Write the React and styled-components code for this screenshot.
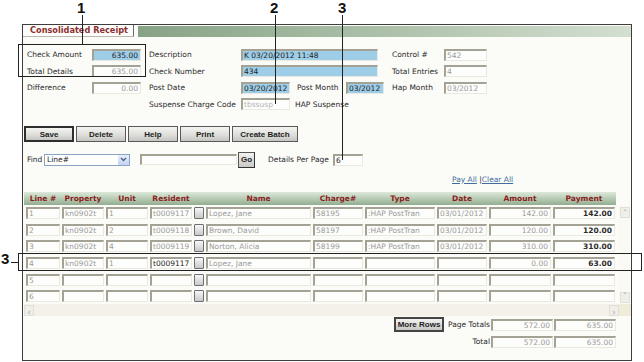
import styled, { createGlobalStyle } from 'styled-components'

const GlobalStyle = createGlobalStyle`
  html, body { margin: 0; padding: 0; background: #ffffff; }
  body { font-family: 'DejaVu Sans', Verdana, sans-serif; }
`

const COLS = '34px 42px 42px 42px 10px 105px 50px 70px 50px 62px 62px'

const rows = [
  ['1', 'kn0902t', '1', 't0009117', 'Lopez, Jane', '58195', ':HAP PostTran', '03/01/2012', '142.00', '142.00'],
  ['2', 'kn0902t', '2', 't0009118', 'Brown, David', '58197', ':HAP PostTran', '03/01/2012', '120.00', '120.00'],
  ['3', 'kn0902t', '4', 't0009119', 'Norton, Alicia', '58199', ':HAP PostTran', '03/01/2012', '310.00', '310.00'],
  ['4', 'kn0902t', '1', 't0009117', 'Lopez, Jane', '', '', '', '0.00', '63.00', true],
  ['5', '', '', '', '', '', '', '', '', ''],
  ['6', '', '', '', '', '', '', '', '', '']
]

export default function App () {
  return (
    <Page>
      <GlobalStyle />
      <Frame>
        <TabRow>
          <Tab>Consolidated Receipt</Tab>
          <TabBar />
        </TabRow>

        <Form>
          <Row>
            <Label $w={65}>Check Amount</Label>
            <Field $w={49} $blue $right $dark>635.00</Field>
            <Label $w={92} $ml={8}>Description</Label>
            <Field $w={137} $blue $dark>K 03/20/2012 11:48</Field>
            <Label $w={52} $ml={14}>Control #</Label>
            <Field $w={43}>542</Field>
          </Row>
          <Row>
            <Label $w={65}>Total Details</Label>
            <Field $w={49} $right>635.00</Field>
            <Label $w={92} $ml={8}>Check Number</Label>
            <Field $w={137} $blue $dark>434</Field>
            <Label $w={52} $ml={14}>Total Entries</Label>
            <Field $w={43}>4</Field>
          </Row>
          <Row>
            <Label $w={65}>Difference</Label>
            <Field $w={49} $right>0.00</Field>
            <Label $w={92} $ml={8}>Post Date</Label>
            <Field $w={49} $blue $dark>03/20/2012</Field>
            <Label $w={49} $ml={7}>Post Month</Label>
            <Field $w={38} $blue $dark>03/2012</Field>
            <Label $w={52} $ml={8}>Hap Month</Label>
            <Field $w={43}>03/2012</Field>
          </Row>
          <Row>
            <Label $w={114}></Label>
            <Label $w={92} $ml={8}>Suspense Charge Code</Label>
            <Field $w={49} $faint>tbssusp</Field>
            <Label $ml={5}>HAP Suspense</Label>
          </Row>
        </Form>

        <Toolbar>
          <Button $w={50} $focus>Save</Button>
          <Button $w={50}>Delete</Button>
          <Button $w={50}>Help</Button>
          <Button $w={50}>Print</Button>
          <Button $w={66}>Create Batch</Button>
        </Toolbar>

        <FindRow>
          <Label $w={17}>Find</Label>
          <Select>
            <span>Line#</span>
            <SelectArrow>
              <svg width="7" height="5" viewBox="0 0 7 5">
                <path d="M1 1 L3.5 3.5 L6 1" fill="none" stroke="#4d6185" strokeWidth="1.4" />
              </svg>
            </SelectArrow>
          </Select>
          <Field $w={97} $ml={10} $h={11}></Field>
          <SmallButton>Go</SmallButton>
          <Label $w={65} $ml={13}>Details Per Page</Label>
          <Field $w={30} $dark>6</Field>
        </FindRow>

        <LinkRow>
          <Link>Pay All</Link>
          <span>&nbsp;|</span>
          <Link>Clear All</Link>
        </LinkRow>

        <GridHeader>
          <HeadCell>Line #</HeadCell>
          <HeadCell>Property</HeadCell>
          <HeadCell>Unit</HeadCell>
          <HeadCell>Resident</HeadCell>
          <HeadCell></HeadCell>
          <HeadCell>Name</HeadCell>
          <HeadCell>Charge#</HeadCell>
          <HeadCell>Type</HeadCell>
          <HeadCell>Date</HeadCell>
          <HeadCell>Amount</HeadCell>
          <HeadCell>Payment</HeadCell>
        </GridHeader>

        <GridArea>
          <GridBody>
            {rows.map(r => (
              <GridRow key={r[0]}>
                <Field $w={34}>{r[0]}</Field>
                <Field $w={42}>{r[1]}</Field>
                <Field $w={42}>{r[2]}</Field>
                <Field $w={42} $dark={r[10]}>{r[3]}</Field>
                <LookupButton />
                <Field $w={105}>{r[4]}</Field>
                <Field $w={50}>{r[5]}</Field>
                <Field $w={70}>{r[6]}</Field>
                <Field $w={50}>{r[7]}</Field>
                <Field $w={62} $right>{r[8]}</Field>
                <Field $w={62} $right $pay>{r[9]}</Field>
              </GridRow>
            ))}
          </GridBody>
          <VScroll>
            <ScrollArrow>&#710;</ScrollArrow>
            <ScrollArrow $down>&#711;</ScrollArrow>
          </VScroll>
        </GridArea>
        <HScroll>
          <ScrollArrow>&lsaquo;</ScrollArrow>
          <HTrack />
          <ScrollArrow>&rsaquo;</ScrollArrow>
          <Corner />
        </HScroll>

        <Totals>
          <TotalRow>
            <MoreButton>More Rows</MoreButton>
            <Label>Page Totals</Label>
            <Field $w={62} $right>572.00</Field>
            <Field $w={62} $right>635.00</Field>
          </TotalRow>
          <TotalRow>
            <Label>Total</Label>
            <Field $w={62} $right>572.00</Field>
            <Field $w={62} $right>635.00</Field>
          </TotalRow>
        </Totals>
      </Frame>

      <Num style={{ left: 77, top: 0 }}>1</Num>
      <VLine style={{ left: 82, top: 15, height: 29 }} />
      <Callout style={{ left: 18, top: 44, width: 128, height: 33 }} />

      <Num style={{ left: 270, top: 0 }}>2</Num>
      <VLine style={{ left: 275, top: 15, height: 89 }} />

      <Num style={{ left: 338, top: 0 }}>3</Num>
      <VLine style={{ left: 342, top: 15, height: 145 }} />

      <Num style={{ left: 1, top: 251 }}>3</Num>
      <HLine style={{ left: 11, top: 262, width: 7 }} />
      <Callout style={{ left: 18, top: 253, width: 624, height: 18 }} />
    </Page>
  )
}

const Page = styled.div`
  position: relative;
  width: 644px;
  height: 362px;
  overflow: hidden;
  box-sizing: border-box;
  padding: 24px 0 0 22px;
`

const Frame = styled.div`
  box-sizing: border-box;
  width: 610px;
  height: 337px;
  border: 1px solid #3e3e3e;
  background: #fbfbf8;
  display: flex;
  flex-direction: column;
`

const TabRow = styled.div`
  display: flex;
  align-items: stretch;
  height: 12px;
`

const Tab = styled.div`
  width: 111px;
  box-sizing: border-box;
  padding-left: 7px;
  border-right: 1px solid #6a6a6a;
  border-bottom: 1px solid #b9b9b0;
  background: #fdfdfb;
  color: #8c3030;
  font-weight: bold;
  font-size: 8.2px;
  line-height: 11px;
  white-space: nowrap;
`

const TabBar = styled.div`
  flex: 1;
  margin: 1px 0 0 4px;
  background: linear-gradient(to right, #87a386 0%, #a9bea6 45%, #d3dfd0 100%);
`

const Form = styled.div`
  margin-top: 9.5px;
  padding-left: 4px;
  display: flex;
  flex-direction: column;
`

const Row = styled.div`
  display: flex;
  align-items: center;
  height: 16.5px;
`

const Label = styled.div`
  box-sizing: border-box;
  ${p => p.$w ? `width: ${p.$w}px;` : ''}
  margin-left: ${p => p.$ml || 0}px;
  flex-shrink: 0;
  font-size: 7.5px;
  color: #2a2a2a;
  white-space: nowrap;
`

const Field = styled.div`
  box-sizing: border-box;
  flex-shrink: 0;
  width: ${p => p.$w}px;
  height: ${p => p.$h || 12}px;
  margin-left: ${p => p.$ml || 0}px;
  border-style: solid;
  border-width: 2px 1px 1px 2px;
  border-color: #a4a195 #ebe9df #ebe9df #a4a195;
  background: ${p => p.$blue ? '#9ecde7' : '#fdfdfb'};
  color: ${p => p.$pay ? '#2b2b2b' : p.$dark ? '#1e1e1e' : p.$faint ? '#b4b4b4' : '#9a9a9a'};
  font-weight: ${p => p.$pay ? 'bold' : 'normal'};
  font-size: 7.5px;
  line-height: 9px;
  text-align: ${p => p.$right ? 'right' : 'left'};
  padding: 0 2px 0 1px;
  white-space: nowrap;
  overflow: hidden;
`

const Toolbar = styled.div`
  display: flex;
  gap: 2px;
  margin-top: 13.5px;
  padding-left: 1px;
`

const Button = styled.div`
  box-sizing: border-box;
  width: ${p => p.$w}px;
  height: 16px;
  border: ${p => p.$focus ? '2px solid #2e2e2e' : '1px solid #5a5a5a'};
  background: linear-gradient(#f4f4f2, #dcdcd8 60%, #c4c4c0);
  font-family: 'Liberation Sans', Arial, sans-serif;
  font-weight: bold;
  font-size: 8px;
  color: #1e1e1e;
  display: flex;
  align-items: center;
  justify-content: center;
`

const FindRow = styled.div`
  display: flex;
  align-items: center;
  height: 17px;
  margin-top: 9px;
  padding-left: 4px;
`

const Select = styled.div`
  box-sizing: border-box;
  width: 86px;
  height: 12px;
  border: 1px solid #8aa4c4;
  background: #ffffff;
  display: flex;
  align-items: center;
  justify-content: space-between;
  padding-left: 2px;
  font-size: 7.5px;
  color: #1e1e1e;
`

const SelectArrow = styled.div`
  width: 11px;
  height: 10px;
  background: linear-gradient(#e6eefb, #c3d3f2);
  border-radius: 1px;
  display: flex;
  align-items: center;
  justify-content: center;
`

const SmallButton = styled.div`
  box-sizing: border-box;
  width: 17px;
  height: 16px;
  margin-left: 1px;
  border: 1px solid #555;
  border-right-color: #333;
  border-bottom-color: #333;
  background: linear-gradient(#f2f2f0, #c8c8c4);
  font-family: 'Liberation Sans', Arial, sans-serif;
  font-weight: bold;
  font-size: 8px;
  color: #1e1e1e;
  display: flex;
  align-items: center;
  justify-content: center;
`

const LinkRow = styled.div`
  display: flex;
  align-items: center;
  height: 10px;
  margin-top: 6px;
  padding-left: 429px;
  font-size: 7.5px;
  color: #2a2a2a;
`

const Link = styled.span`
  color: #3f6e9e;
  text-decoration: underline;
`

const GridHeader = styled.div`
  display: grid;
  grid-template-columns: ${COLS};
  column-gap: 2px;
  align-items: center;
  width: 592px;
  height: 13px;
  margin: 8px 0 0 1px;
  padding-left: 2px;
  box-sizing: border-box;
  background: linear-gradient(#dde8da, #b4c9b1 55%, #93ad91);
`

const HeadCell = styled.div`
  text-align: center;
  font-weight: bold;
  font-size: 7.5px;
  color: #8a1d1d;
  white-space: nowrap;
`

const GridArea = styled.div`
  display: flex;
  margin-left: 1px;
`

const GridBody = styled.div`
  width: 595px;
  padding: 2px 0 2px 2px;
  box-sizing: border-box;
  display: flex;
  flex-direction: column;
  gap: 4.7px;
`

const GridRow = styled.div`
  display: grid;
  grid-template-columns: ${COLS};
  column-gap: 2px;
  height: 12px;
`

const LookupButton = styled.div`
  box-sizing: border-box;
  width: 10px;
  height: 12px;
  border: 1px solid #6e6e6e;
  border-radius: 1px;
  background: linear-gradient(#f6f6f6, #c9c9c9);
`

const VScroll = styled.div`
  width: 11px;
  background: #faf9f4;
  display: flex;
  flex-direction: column;
  justify-content: space-between;
  padding: 2px 0 1px 1px;
  box-sizing: border-box;
`

const ScrollArrow = styled.div`
  box-sizing: border-box;
  width: 10px;
  height: 11px;
  background: #efeee8;
  border: 1px solid #e2e0d6;
  color: #a8a8a2;
  font-size: 9px;
  line-height: ${p => p.$down ? '9px' : '12px'};
  text-align: center;
  font-family: 'DejaVu Sans', sans-serif;
`

const HScroll = styled.div`
  display: flex;
  align-items: center;
  height: 12px;
  margin-left: 1px;
  background: #f4f2e8;
`

const HTrack = styled.div`
  flex: 1;
`

const Corner = styled.div`
  width: 12px;
  height: 12px;
  background: #efecd9;
`

const Totals = styled.div`
  display: flex;
  flex-direction: column;
  padding-right: 15px;
`

const TotalRow = styled.div`
  display: flex;
  align-items: center;
  justify-content: flex-end;
  gap: 1px;
  height: 17px;
`

const MoreButton = styled(SmallButton)`
  width: 50px;
  height: 15px;
  margin-right: 3px;
  border: 2px solid #444;
`

const Num = styled.div`
  position: absolute;
  font-family: 'Liberation Sans', Arial, sans-serif;
  font-weight: bold;
  font-size: 15px;
  line-height: 15px;
  color: #111;
`

const VLine = styled.div`
  position: absolute;
  width: 1px;
  background: #222;
`

const HLine = styled.div`
  position: absolute;
  height: 1px;
  background: #222;
`

const Callout = styled.div`
  position: absolute;
  box-sizing: border-box;
  border: 1px solid #222;
`
